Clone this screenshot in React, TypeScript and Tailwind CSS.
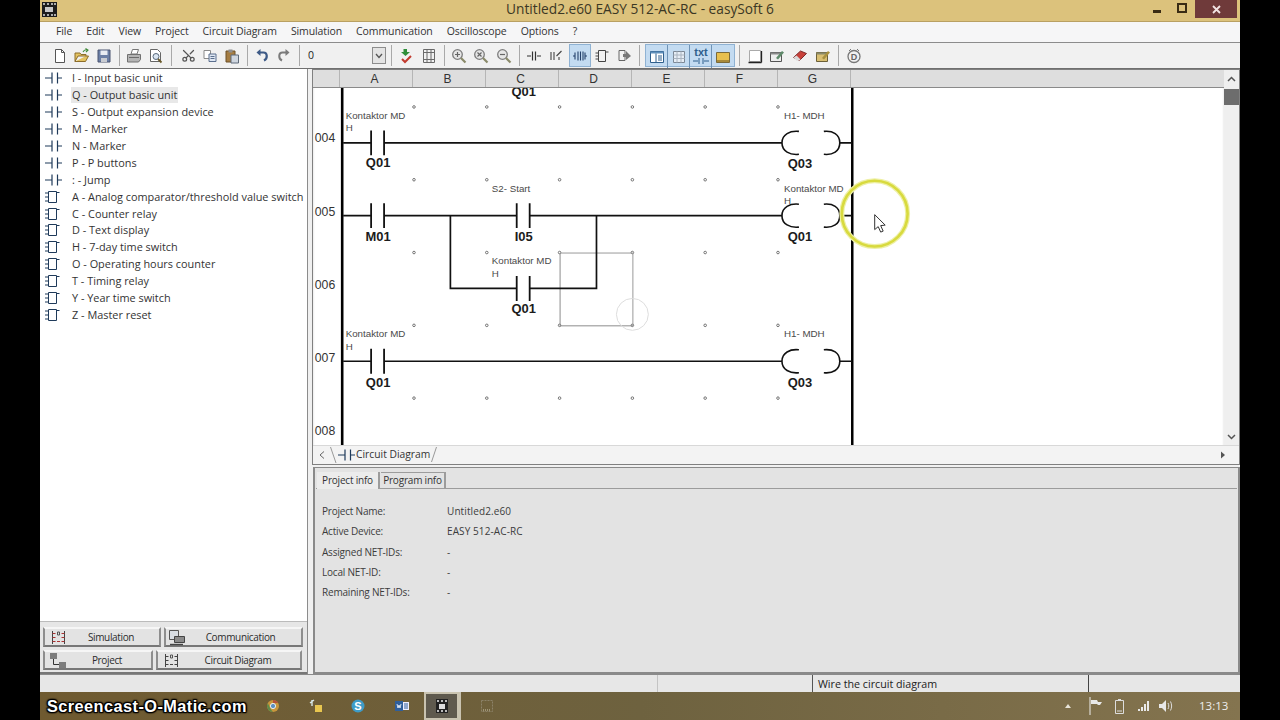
import { Scissors } from 'lucide-react';
import type { ReactNode } from 'react';

const ui = "font-['Open_Sans',sans-serif]";

const MENU = ['File', 'Edit', 'View', 'Project', 'Circuit Diagram', 'Simulation', 'Communication', 'Oscilloscope', 'Options', '?'];
const COLUMNS = ['A', 'B', 'C', 'D', 'E', 'F', 'G'];

const CONTACTS = ['I - Input basic unit', 'Q - Output basic unit', 'S - Output expansion device', 'M - Marker', 'N - Marker', 'P - P buttons', ': - Jump'];
const BLOCKS = ['A - Analog comparator/threshold value switch', 'C - Counter relay', 'D - Text display', 'H - 7-day time switch', 'O - Operating hours counter', 'T - Timing relay', 'Y - Year time switch', 'Z - Master reset'];

const INFO = [
  ['Project Name:', 'Untitled2.e60'],
  ['Active Device:', 'EASY 512-AC-RC'],
  ['Assigned NET-IDs:', '-'],
  ['Local NET-ID:', '-'],
  ['Remaining NET-IDs:', '-'],
];

function Ico({ children }: { children: ReactNode }) {
  return (
    <svg width="16" height="16" viewBox="0 0 16 16" fill="none">
      {children}
    </svg>
  );
}

function Btn({ children, className = '' }: { children: ReactNode; className?: string }) {
  return <div className={`w-[22px] h-[23px] flex items-center justify-center shrink-0 ${className}`}>{children}</div>;
}

function Sep() {
  return (
    <div className="w-[8px] h-[21px] flex justify-center shrink-0">
      <div className="w-px h-full bg-[#a9a9a9]" />
    </div>
  );
}

function Magnifier({ mark }: { mark: string }) {
  return (
    <Ico>
      <circle cx="6.500" cy="6.500" r="4.800" fill="#e6e6e6" stroke="#7d7d7d" strokeWidth="1.300" />
      <path d={mark} stroke="#666" strokeWidth="1.200" />
      <path d="M10 10l4.500 4.500" stroke="#8a8a6a" strokeWidth="2.200" />
    </Ico>
  );
}

function Toolbar() {
  return (
    <div className="h-[25px] bg-[#f1f1f1] flex items-center pl-[9px] shrink-0">
      <Btn>
        <Ico><path d="M3.500 1.500h6l3 3v10h-9z" fill="#fff" stroke="#555" /><path d="M9.500 1.500v3h3" stroke="#555" /></Ico>
      </Btn>
      <Btn>
        <Ico><path d="M1 13.500V5h5l1 1.500h5V8H4l-3 5.500h10.500l3-5.500H12" fill="#e3c261" stroke="#8c6d2a" /><path d="M9 4c1-2 3-2.500 4.500-2M11.500 .5l2.500 1.500-2 2" stroke="#3f8a3a" strokeWidth="1.100" /></Ico>
      </Btn>
      <Btn>
        <Ico><path d="M2 2h12v12H2z" fill="#6b7fa6" stroke="#4a5570" /><path d="M4.500 2.500h7v4.500h-7z" fill="#e8ecf3" /><path d="M5 10h6v4H5z" fill="#c9ccd2" /></Ico>
      </Btn>
      <Sep />
      <Btn>
        <Ico><path d="M5 6l1.500-4.500h6L11 6z" fill="#fff" stroke="#777" /><path d="M1.500 6.500h13v5l-2 2.500h-11z" fill="#b4b4b4" stroke="#707070" /><path d="M3 9.500h10" stroke="#6b6b6b" /></Ico>
      </Btn>
      <Btn>
        <Ico><path d="M2.500 1.500h7l3 3v9h-10z" fill="#fff" stroke="#666" /><circle cx="8" cy="8.500" r="3" fill="#dbe6f2" stroke="#5a6a7c" /><path d="M10 11l3.500 3.500" stroke="#6b5a2a" strokeWidth="1.800" /></Ico>
      </Btn>
      <Sep />
      <Btn className="ml-[2px]">
        <Scissors size={15} color="#555" strokeWidth={2} className="-rotate-90" />
      </Btn>
      <Btn>
        <Ico><path d="M2 2.500h6.500v8H2z" fill="#fff" stroke="#8a8a8a" /><path d="M7 6h7v7.500H7z" fill="#dfe7f3" stroke="#5b6f8e" /><path d="M8.500 8.500h4M8.500 10.500h4" stroke="#5b6f8e" /></Ico>
      </Btn>
      <Btn>
        <Ico><path d="M2 3h9v11H2z" fill="#a57d42" stroke="#6c5128" /><path d="M4.500 1.500h4v3h-4z" fill="#8f8f8f" /><path d="M7 7h7.500v8H7z" fill="#cfd6df" stroke="#5f6b7a" /></Ico>
      </Btn>
      <Sep />
      <Btn>
        <Ico><path d="M4.500 4.500h5c4 0 4.500 6 .5 8" stroke="#3d5a86" strokeWidth="2.200" /><path d="M6.500 1L2.500 4.500 6.500 8z" fill="#3d5a86" /></Ico>
      </Btn>
      <Btn>
        <Ico><path d="M11.500 4.500h-5c-4 0-4.500 6-.5 8" stroke="#7b7b7b" strokeWidth="2" /><path d="M9.500 1l4 3.500-4 3.500z" fill="#7b7b7b" /></Ico>
      </Btn>
      <Sep />
      <div className={`w-[84px] h-[20px] shrink-0 flex items-center justify-between bg-[#f0f0f0] ${ui}`}>
        <span className="pl-[5px] text-[10.500px] text-[#222]">0</span>
        <div className="w-[14px] h-[17px] mr-px bg-[#e4e4e4] border border-[#8d8d8d] flex items-center justify-center">
          <svg width="8" height="6" viewBox="0 0 8 6" fill="none"><path d="M1 1l3 3.500L7 1" stroke="#555" strokeWidth="1.300" /></svg>
        </div>
      </div>
      <Sep />
      <Btn>
        <Ico><path d="M5.500 1h3.500v3h3L7.500 8 3 4h2.500z" fill="#2f8f3a" /><path d="M4 11l3 3 6-6" stroke="#c23b2e" strokeWidth="2" /></Ico>
      </Btn>
      <Btn className="ml-px">
        <Ico><path d="M2.500 1.500h11v13h-11zM2.500 4.500h11M2.500 11.500h11M6 1.500v13M10 1.500v13" stroke="#6a6a6a" /></Ico>
      </Btn>
      <Sep />
      <Btn><Magnifier mark="M4 6.500h5M6.500 4v5" /></Btn>
      <Btn><Magnifier mark="M4.500 4.500l4 4M8.500 4.500l-4 4" /></Btn>
      <Btn className="ml-px"><Magnifier mark="M4 6.500h5" /></Btn>
      <Sep />
      <Btn>
        <Ico><path d="M1 8h4M11 8h4M6.500 3.500v9M9.500 3.500v9" stroke="#333" strokeWidth="1.200" /></Ico>
      </Btn>
      <Btn>
        <Ico><path d="M3 4v8M6 4v8M8.500 8l5-5M11 9v3" stroke="#444" strokeWidth="1.100" /></Ico>
      </Btn>
      <Btn className="ml-[2px] bg-[#c3dbf1] border border-[#8fb2d3]">
        <Ico><path d="M1 8h2M13 8h2M3 4.500v7M6 3.500v9M8.500 3.500v9M11 3.500v9M13 4.500v7" stroke="#24406a" strokeWidth="1.100" /></Ico>
      </Btn>
      <Btn>
        <Ico><path d="M4.500 2.500h7v11h-7z" stroke="#444" /><path d="M1.500 5h3M1.500 8h3M1.500 11h3M11.500 4h3" stroke="#444" /></Ico>
      </Btn>
      <Btn>
        <Ico><path d="M3 2.500h6v10H3z" stroke="#666" /><path d="M7 6h3V3l5 5-5 4V9H7z" fill="#777" /></Ico>
      </Btn>
      <Sep />
      <div className="ml-[2px] flex h-[23px] border border-[#8fb2d3] bg-[#c3dbf1]">
        <Btn className="border-r border-[#6f93b6]">
          <Ico><path d="M1.500 2.500h13v11h-13z" fill="#fff" stroke="#2f5f8c" /><path d="M1.500 2.500h13v2h-13z" fill="#5f8fbb" /><path d="M7 4.500v9M9 7h4M9 9h4M9 11h4" stroke="#2f5f8c" /></Ico>
        </Btn>
        <Btn className="border-r border-[#6f93b6]">
          <Ico><path d="M2.500 2.500h11v11h-11z" fill="#e6edf5" stroke="#7c8896" /><path d="M2.500 6h11M2.500 9.500h11M6 2.500v11M10 2.500v11" stroke="#aab4c0" /></Ico>
        </Btn>
        <Btn className="border-r border-[#6f93b6]">
          <svg width="20" height="19" viewBox="0 0 20 19" fill="none">
            <text x="10" y="9" textAnchor="middle" fontSize="11" fontFamily="Liberation Sans" fontWeight="bold" fill="#2f5f8c">txt</text>
            <path d="M2 14h5M13 14h5M8 11v6M12 11v6" stroke="#2f5f8c" />
          </svg>
        </Btn>
        <Btn>
          <Ico><path d="M1.500 3.500h13v10h-13z" fill="#e8c04e" stroke="#7a6a3a" /><path d="M2 11h12v2H2z" fill="#a88a3a" /></Ico>
        </Btn>
      </div>
      <Sep />
      <Btn className="ml-px">
        <Ico><path d="M2.500 2.500h11v11h-11z" fill="#fff" stroke="#aaa" /><path d="M1.500 14.500h13M14.500 3v11.500" stroke="#222" strokeWidth="1.300" /></Ico>
      </Btn>
      <Btn>
        <Ico><path d="M1.500 4.500h11v9h-11z" fill="#eee" stroke="#555" /><path d="M1.500 4.500h11v2h-11z" fill="#8a8a8a" /><path d="M7 10l6-7 2 1.500-6 7z" fill="#5e8a6a" /></Ico>
      </Btn>
      <Btn className="ml-px">
        <Ico><path d="M1.500 9.500l7-6.500 6 2.500-7 7z" fill="#c8413a" stroke="#7c2a2a" /><path d="M1.500 9.500l3 3 3 0 1-1-4-4z" fill="#d9d9d9" /></Ico>
      </Btn>
      <Btn className="ml-px">
        <Ico><path d="M1.500 4.500h11v9h-11z" fill="#d9bf72" stroke="#6c6038" /><path d="M1.500 4.500h11v2h-11z" fill="#8a8a6a" /><path d="M7 10l6-7 2 1.500-6 7z" fill="#a8903f" /></Ico>
      </Btn>
      <Sep />
      <Btn className="ml-px">
        <svg width="16" height="16" viewBox="0 0 16 16" fill="none">
          <circle cx="8" cy="8.500" r="6" stroke="#777" strokeWidth="1.300" />
          <text x="8" y="12" textAnchor="middle" fontSize="9" fontFamily="Liberation Sans" fontWeight="bold" fill="#666">D</text>
          <path d="M3 3l2-2M13 3l-2-2" stroke="#777" />
        </svg>
      </Btn>
    </div>
  );
}

function ContactIcon() {
  return (
    <svg width="17" height="12" viewBox="0 0 17 12" fill="none" className="shrink-0">
      <path d="M0 6h7M7 .5v11M12.500 .5v11M12.500 6h4.500" stroke="#1f3a5a" strokeWidth="1.200" />
    </svg>
  );
}

function BlockIcon() {
  return (
    <svg width="15" height="14" viewBox="0 0 15 14" fill="none" className="shrink-0">
      <path d="M3.500 1.500h8v11h-8z" stroke="#1f3a5a" />
      <path d="M0 3h3.500M0 7h3.500M0 11h3.500M11.500 2.500h3" stroke="#1f3a5a" />
    </svg>
  );
}

function ListRow({ label, icon, active }: { label: string; icon: ReactNode; active?: boolean }) {
  return (
    <div className="h-[16.900px] flex items-center pl-[5px]">
      <div className="w-[26px] flex shrink-0">{icon}</div>
      <span className={`px-px text-[10.900px] leading-[16px] text-[#333] whitespace-nowrap ${active ? 'bg-[#e8e8e8]' : ''}`}>{label}</span>
    </div>
  );
}

function NavIcon({ kind }: { kind: 'sim' | 'com' | 'prj' | 'cir' }) {
  if (kind === 'com') {
    return (
      <svg width="18" height="17" viewBox="0 0 18 17" fill="none">
        <path d="M1.500 1.500h9v9h-9z" fill="#d8dde3" stroke="#555" />
        <path d="M6.500 7.500h10v6h-10z" fill="#8a8a8a" stroke="#444" />
        <path d="M2 15.500h13" stroke="#444" strokeWidth="1.400" />
      </svg>
    );
  }
  if (kind === 'prj') {
    return (
      <svg width="18" height="17" viewBox="0 0 18 17" fill="none">
        <path d="M1 1h7v6H1z" fill="#7d7d7d" />
        <path d="M10 10h7v6h-7z" fill="#7d7d7d" />
        <path d="M4.500 7v5.500H10" stroke="#333" />
      </svg>
    );
  }
  return (
    <svg width="15" height="15" viewBox="0 0 15 15" fill="none">
      <path d="M1.500 1v13M13.500 1v13" stroke="#444" />
      <path d="M1.500 3.500h3M10.500 3.500h3M1.500 7.500h3M10.500 7.500h3M1.500 11.500h3M6 11.500h3M10.500 11.500h3" stroke={kind === 'sim' ? '#a33' : '#444'} />
      <path d="M6.500 2h2v3h-2z" stroke="#555" />
    </svg>
  );
}

function NavBtn({ label, kind, className, iconBox }: { label: string; kind: 'sim' | 'com' | 'prj' | 'cir'; className: string; iconBox: string }) {
  return (
    <div className={`h-[20px] flex items-center bg-[#e3e3e3] border-2 border-t-[#f6f6f6] border-l-[#8e8e8e] border-r-[#8e8e8e] border-b-[#777] ${className}`}>
      <div className={`flex justify-center shrink-0 ${iconBox}`}>
        <NavIcon kind={kind} />
      </div>
      <span className="flex-1 pr-[8px] text-center text-[10px] leading-none tracking-[-0.350px] text-[#2c2c2c] whitespace-nowrap">{label}</span>
    </div>
  );
}

function LeftPanel() {
  return (
    <div className={`w-[268px] shrink-0 flex flex-col border-r border-[#8c8c8c] ${ui}`}>
      <div className="flex-1 bg-white pt-px border-b border-[#bbb]">
        {CONTACTS.map((c, i) => (
          <ListRow key={c} label={c} icon={<ContactIcon />} active={i === 1} />
        ))}
        {BLOCKS.map((b) => (
          <ListRow key={b} label={b} icon={<BlockIcon />} />
        ))}
      </div>
      <div className="h-[52px] bg-[#e6e6e6] border-b-2 border-[#777] pl-[3px] pt-[5px] flex flex-col gap-[3px]">
        <div className="flex gap-[3px]">
          <NavBtn label="Simulation" kind="sim" className="w-[118px]" iconBox="w-[26px]" />
          <NavBtn label="Communication" kind="com" className="w-[139px]" iconBox="w-[22px]" />
        </div>
        <div className="flex gap-[3px]">
          <NavBtn label="Project" kind="prj" className="w-[110px]" iconBox="w-[26px]" />
          <NavBtn label="Circuit Diagram" kind="cir" className="w-[146px]" iconBox="w-[26px]" />
        </div>
      </div>
    </div>
  );
}

const DOT_X = [413, 486, 559, 632, 705, 778];
const DOT_Y = [106, 179, 252, 325, 398];

function Contact({ x, y }: { x: number; y: number }) {
  return <path d={`M${x} ${y - 12.500}v25M${x + 13} ${y - 12.500}v25`} stroke="#111" strokeWidth="1.800" />;
}

function Coil({ y }: { y: number }) {
  return (
    <path
      d={`M799 ${y - 11.500}c-9 -1 -17 3 -17 11.500s8 12.500 17 11.500M824 ${y - 11.500}c9 -1 16 3 16 11.500s-7 12.500 -16 11.500`}
      stroke="#111"
      strokeWidth="1.600"
      fill="none"
    />
  );
}

function Name({ x, y, t }: { x: number; y: number; t: string }) {
  return (
    <text x={x} y={y} fontSize="13" fontWeight="bold" fontFamily="Liberation Sans" fill="#1c1c1c" textAnchor="middle">
      {t}
    </text>
  );
}

function Note({ x, y, t }: { x: number; y: number; t: string }) {
  return (
    <text x={x} y={y} fontSize="9.800" fontFamily="Liberation Sans" fill="#4a4a4a">
      {t}
    </text>
  );
}

function RowNo({ y, t }: { y: number; t: string }) {
  return (
    <text x={313.500} y={y} fontSize="12.300" fontFamily="Liberation Sans" fill="#333">
      {t}
    </text>
  );
}

function Ladder() {
  return (
    <svg width="911" height="358" viewBox="313 87 911 358" className="block">
      <rect x="313" y="87" width="911" height="358" fill="#fff" />
      {DOT_Y.flatMap((y) =>
        DOT_X.map((x) => <circle key={`${x}-${y}`} cx={x} cy={y} r="1.300" fill="#fff" stroke="#555" strokeWidth="0.800" />),
      )}

      <path d="M341 87v358" stroke="#000" strokeWidth="2.600" />
      <path d="M852.500 87v358" stroke="#000" strokeWidth="2.500" />

      <path d="M559.500 252.500v73h73" stroke="#8c8c8c" fill="none" />
      <path d="M559.500 252.500h73v73" stroke="#9a9a9a" fill="none" />
      <circle cx="632" cy="314" r="16" stroke="#dddddd" fill="none" />

      <path
        d="M342 142h28M383 142h399M840 142h12M342 215h28M383 215h133M529 215h253M840 215h12M449.500 215v73h66.500M529 288h67v-73M342 361h28M383 361h399M840 361h12"
        stroke="#111"
        strokeWidth="1.700"
        fill="none"
      />
      <Contact x={370} y={142} />
      <Contact x={370} y={215} />
      <Contact x={516} y={215} />
      <Contact x={516} y={288} />
      <Contact x={370} y={361} />
      <Coil y={142} />
      <Coil y={215} />
      <Coil y={361} />

      <Name x={523} y={94.700} t="Q01" />
      <Name x={377} y={166.700} t="Q01" />
      <Name x={800} y={167.700} t="Q03" />
      <Name x={377} y={240} t="M01" />
      <Name x={523} y={240} t="I05" />
      <Name x={800} y={240.700} t="Q01" />
      <Name x={523} y={312.700} t="Q01" />
      <Name x={377} y={386.700} t="Q01" />
      <Name x={800} y={386.700} t="Q03" />

      <Note x={344.500} y={118} t="Kontaktor MD" />
      <Note x={344.500} y={130.500} t="H" />
      <Note x={784} y={118} t="H1- MDH" />
      <Note x={491} y={191} t="S2- Start" />
      <Note x={784} y={191} t="Kontaktor MD" />
      <Note x={784} y={203.500} t="H" />
      <Note x={491} y={264} t="Kontaktor MD" />
      <Note x={491} y={276.500} t="H" />
      <Note x={344.500} y={337} t="Kontaktor MD" />
      <Note x={344.500} y={349.500} t="H" />
      <Note x={784} y={337} t="H1- MDH" />

      <RowNo y={141.500} t="004" />
      <RowNo y={215.500} t="005" />
      <RowNo y={288.500} t="006" />
      <RowNo y={361.500} t="007" />
      <RowNo y={434.500} t="008" />

      <circle cx="875" cy="213" r="33" fill="none" stroke="#eef0a6" strokeWidth="5" />
      <circle cx="875" cy="213" r="33" fill="none" stroke="#d8da3e" strokeWidth="2.600" />
      <path d="M875 214v15l3.500-3 2.500 5.500 2.500-1-2.500-5.500 4.500-.5z" fill="#fff" stroke="#333" strokeWidth="1" />
    </svg>
  );
}

function DiagramPane() {
  return (
    <div className={`h-[396px] flex flex-col border border-[#808080] ${ui}`}>
      <div className="flex flex-1 min-h-0">
        <div className="w-[911px] flex flex-col shrink-0">
          <div className="h-[18px] bg-[#dedede] border-b border-[#8a8a8a] flex shrink-0 font-['Liberation_Sans',sans-serif]">
            <div className="w-[27px] border-r border-[#b5b5b5]" />
            {COLUMNS.map((c) => (
              <div key={c} className="w-[73px] pr-[3px] flex items-center justify-center border-r border-[#b5b5b5] text-[12px] text-[#333]">
                {c}
              </div>
            ))}
          </div>
          <Ladder />
        </div>
        <div className="flex-1 bg-[#efefef] flex flex-col items-center pt-[6px]">
          <svg width="9" height="6" viewBox="0 0 9 6" fill="none"><path d="M1 5l3.500-3.500L8 5" stroke="#555" strokeWidth="1.500" /></svg>
          <div className="mt-[7px] w-[15px] h-[16px] bg-[#6d6d6d]" />
          <div className="flex-1" />
          <svg width="9" height="6" viewBox="0 0 9 6" fill="none" className="mb-[5px]"><path d="M1 1l3.500 3.500L8 1" stroke="#555" strokeWidth="1.500" /></svg>
        </div>
      </div>
      <div className="h-[19px] bg-[#f3f3f3] border-t border-[#d8d8d8] flex items-center shrink-0">
        <svg width="6" height="8" viewBox="0 0 6 8" fill="none" className="ml-[6px]"><path d="M5 .5L1 4l4 3.500" stroke="#666" /></svg>
        <svg width="7" height="17" viewBox="0 0 7 17" fill="none" className="ml-[5px]"><path d="M.5 0L6 16" stroke="#999" /></svg>
        <div className="ml-px flex items-center gap-[1px] h-full">
          <ContactIcon />
          <span className="text-[10.300px] text-[#333] whitespace-nowrap">Circuit Diagram</span>
          <svg width="6" height="16" viewBox="0 0 6 16" fill="none"><path d="M5.500 0L.5 15" stroke="#999" /></svg>
        </div>
        <div className="flex-1" />
        <svg width="6" height="8" viewBox="0 0 6 8" fill="none" className="mr-[13px]"><path d="M1 .5L5 4 1 7.500z" fill="#555" /></svg>
      </div>
    </div>
  );
}

function InfoPane() {
  return (
    <div className={`flex-1 mt-[2px] ml-px bg-[#e3e3e3] border-2 border-t border-[#8a8a8a] px-px pt-[4px] ${ui}`}>
      <div className="flex h-[17px] border-b border-[#9c9c9c] pl-px">
        <div className="w-[63px] h-[17px] flex items-center justify-center bg-[#ececec] border-r-2 border-[#9c9c9c] text-[10px] text-[#333] tracking-[-0.200px] whitespace-nowrap">Project info</div>
        <div className="ml-px w-[65px] h-[16px] flex items-center justify-center bg-[#e3e3e3] border-t border-r-2 border-[#9c9c9c] text-[10px] text-[#333] tracking-[-0.200px] whitespace-nowrap">Program info</div>
      </div>
      <div className="pl-[6px] pt-[15px] flex flex-col gap-[4.700px]">
        {INFO.map(([k, v]) => (
          <div key={k} className="flex h-[15.500px] items-center text-[10px] text-[#3c3c3c] whitespace-nowrap">
            <span className="w-[125px] tracking-[-0.200px]">{k}</span>
            <span className="tracking-[0.100px]">{v}</span>
          </div>
        ))}
      </div>
    </div>
  );
}

function StatusBar() {
  return (
    <div className={`h-[18px] bg-[#e7e7e7] border-t border-[#8a8a8a] flex text-[10.700px] text-[#222] shrink-0 ${ui}`}>
      <div className="w-[618px] border-r border-[#c4c4c4]" />
      <div className="w-[155px] border-r border-[#555]" />
      <div className="w-[276px] pl-[5px] border-r border-[#444] leading-[19px] whitespace-nowrap">Wire the circuit diagram</div>
    </div>
  );
}

function TaskIcon({ children, active, className = '' }: { children: ReactNode; active?: boolean; className?: string }) {
  return (
    <div className={`w-[37px] h-[28px] flex items-center justify-center shrink-0 ${active ? 'bg-[#5f5a4e] border-2 border-r-4 border-[#c9c3b0]' : ''} ${className}`}>
      {children}
    </div>
  );
}

function Taskbar() {
  return (
    <div className="h-[28px] bg-gradient-to-r from-[#6f5a30] via-[#6e623f] to-[#84744f] flex items-center pl-[7px] shrink-0">
      <span className="w-[201px] font-['Liberation_Sans',sans-serif] font-bold text-[16.300px] tracking-[0.450px] text-white whitespace-nowrap leading-[18px] shrink-0 [text-shadow:0_0_2px_#000,0_0_2px_#000,0_0_3px_#000,1px_1px_1px_#000,-1px_-1px_1px_#000,1px_-1px_1px_#000,-1px_1px_1px_#000]">Screencast-O-Matic.com</span>
      <div className="flex ml-[6px]">
        <TaskIcon className="mr-[6px]">
          <svg width="14" height="14" viewBox="0 0 14 14"><circle cx="7" cy="7" r="6" fill="#c8963c" /><path d="M7 1a6 6 0 015.200 3H7z" fill="#b5503a" /><path d="M1.800 4L4.500 10 7 13a6 6 0 01-5.200-9z" fill="#5f8a4a" /><circle cx="7" cy="7" r="2.600" fill="#5b8fc0" stroke="#eee" /></svg>
        </TaskIcon>
        <TaskIcon className="mr-[5px]">
          <svg width="16" height="16" viewBox="0 0 16 16"><path d="M7 7h7v7H7z" fill="#e8c64f" /><path d="M2 5l4-3M4 2v6" stroke="#d8e8e8" strokeWidth="1.400" /></svg>
        </TaskIcon>
        <TaskIcon className="mr-[7px]">
          <svg width="16" height="16" viewBox="0 0 16 16"><circle cx="8" cy="8" r="6.500" fill="#3e9cc8" /><text x="8" y="12" textAnchor="middle" fontSize="11" fontWeight="bold" fontFamily="Liberation Sans" fill="#fff">S</text></svg>
        </TaskIcon>
        <TaskIcon className="mr-[4px]">
          <svg width="16" height="16" viewBox="0 0 16 16"><path d="M1 3h8v10H1z" fill="#2f5f9c" /><path d="M9 4h6v8H9z" fill="#eef" /><path d="M10 6h4M10 8h4M10 10h4" stroke="#2f5f9c" /><path d="M3 6l1 4 1-3 1 3 1-4" stroke="#fff" fill="none" strokeWidth="0.800" /></svg>
        </TaskIcon>
        <TaskIcon active className="mr-[7px]">
          <svg width="16" height="16" viewBox="0 0 16 16"><path d="M2 1h12v14H2z" fill="#222" /><path d="M3 3h2M7 3h2M11 3h2M3 13h2M7 13h2M11 13h2" stroke="#eee" strokeWidth="1.400" /><path d="M5 6h6v5H5z" fill="#ddd" /></svg>
        </TaskIcon>
        <TaskIcon>
          <svg width="14" height="14" viewBox="0 0 14 14" fill="none"><path d="M1.500 1.500h11v11h-11z" stroke="#8c8268" strokeDasharray="2 1" /><path d="M3 11h8" stroke="#cfc8b0" strokeDasharray="1 1" /></svg>
        </TaskIcon>
      </div>
      <div className="flex-1" />
      <div className="flex items-center">
        <svg width="6" height="4" viewBox="0 0 6 4" className="mr-[18px]"><path d="M0 4l3-4 3 4z" fill="#e8e4d8" /></svg>
        <svg width="14" height="18" viewBox="0 0 14 18" fill="none" className="mr-[12px]"><path d="M1 0v18" stroke="#eee" /><path d="M2 3h6l1 2h4l-2 3H9L8 7H2z" fill="#e8e8e8" /></svg>
        <svg width="9" height="15" viewBox="0 0 9 15" fill="none" className="mr-[13px]"><path d="M.5 1.500h8v13h-8z" stroke="#ddd" /><path d="M3 .5h3M2 12h5" stroke="#ddd" /></svg>
        <svg width="13" height="10" viewBox="0 0 13 10" className="mr-[9px]"><path d="M1 8h2v2H1zM4 6h2v4H4zM7 3h2v7H7zM10 0h2v10h-2z" fill="#e8e8e8" /></svg>
        <svg width="14" height="12" viewBox="0 0 14 12" fill="none" className="mr-[26px]"><path d="M0 4h3l4-4v12L3 8H0z" fill="#e8e8e8" /><path d="M9 3c1 2 1 4 0 6M11.500 1.500c1.500 3 1.500 6 0 9" stroke="#ddd" /></svg>
        <span className={`w-[41px] text-[11.500px] text-[#eee] ${ui}`}>13:13</span>
      </div>
    </div>
  );
}

export default function App() {
  return (
    <div className="w-[1280px] h-[720px] bg-black overflow-hidden px-[40px]">
      <div className="w-[1200px] h-[720px] flex flex-col bg-[#f1f1f1]">
        <div className="h-[22px] bg-[#dcc27c] border-b border-[#b9a062] flex items-center shrink-0">
          <svg width="15" height="15" viewBox="0 0 15 15" className="ml-[2px] mb-[3px]">
            <path d="M0 0h15v15H0z" fill="#1d1d1d" />
            <path d="M1 2h2M5 2h2M9 2h2M12 2h2M1 13h2M5 13h2M9 13h2M12 13h2" stroke="#ddd" strokeWidth="1.300" />
            <path d="M3 5h8v5H3z" fill="#c8c8c8" />
          </svg>
          <div className="flex-1 pl-[70px] mb-[2px] text-center text-[13.700px] text-[#3b3724] font-['Open_Sans',sans-serif] whitespace-nowrap">Untitled2.e60 EASY 512-AC-RC - easySoft 6</div>
          <div className="flex items-start self-start h-[18px]">
            <div className="w-[8px] h-[3px] bg-[#3a2c14] mt-[10px] mr-[16px]" />
            <div className="w-[10px] h-[10px] border-2 border-[#3a2c14] mt-[3px] mr-[8px]" />
            <div className="w-[42px] h-[18px] mr-[3px] bg-[#6f3a3a] flex items-center justify-center">
              <svg width="9" height="9" viewBox="0 0 9 9"><path d="M1 1l7 7M8 1L1 8" stroke="#f2e4e4" strokeWidth="1.800" /></svg>
            </div>
          </div>
        </div>

        <div className={`h-[21px] bg-[#f6f6f7] border-b border-[#8c8c8c] flex items-center gap-[14px] pl-[16px] text-[10.500px] tracking-[-0.100px] text-[#333] shrink-0 ${ui}`}>
          {MENU.map((m) => (
            <span key={m}>{m}</span>
          ))}
        </div>

        <Toolbar />

        <div className="flex flex-1 min-h-0 border-t border-[#707070]">
          <LeftPanel />
          <div className="w-[4px] shrink-0 bg-[#f0f0f0]" />
          <div className="flex-1 flex flex-col min-w-0">
            <DiagramPane />
            <InfoPane />
          </div>
        </div>

        <StatusBar />
        <Taskbar />
      </div>
    </div>
  );
}
